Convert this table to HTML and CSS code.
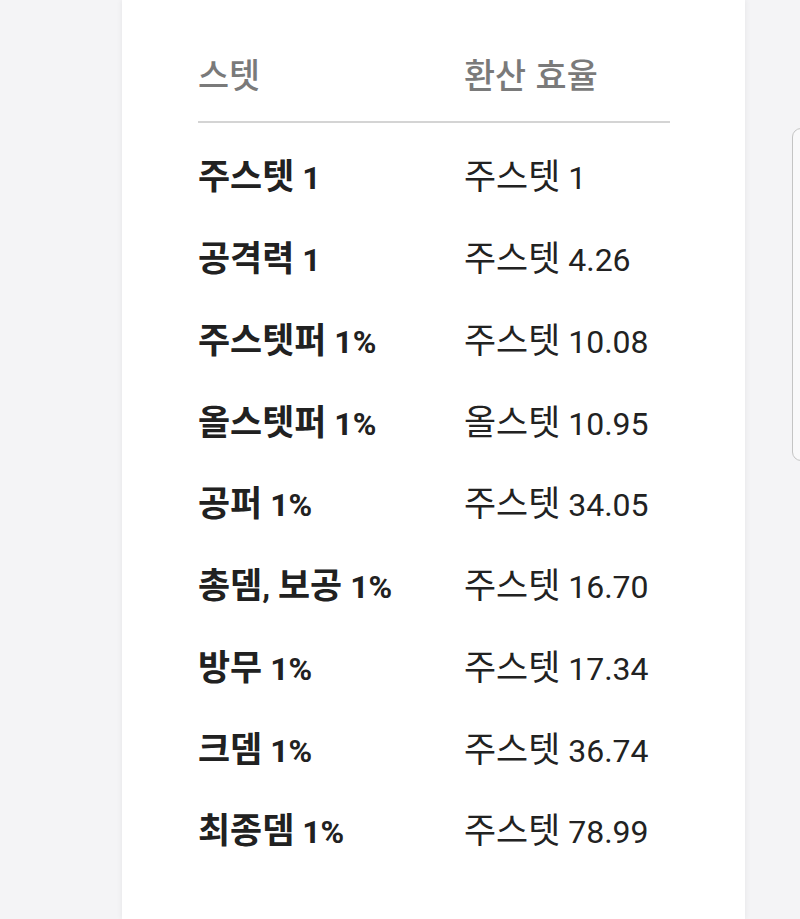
FILE: index.html
```html
<!DOCTYPE html>
<html lang="ko">
<head>
<meta charset="utf-8">
<title>스텟 환산 효율</title>
<link rel="stylesheet" href="styles.css">
</head>
<body>
<main class="card">
  <div class="table">
    <div class="head">
      <div class="th"><span class="ko">스텟</span></div>
      <div class="th"><span class="ko">환산 효율</span></div>
    </div>
    <div class="body">
      <div class="row"><div class="name"><span class="ko">주스텟</span> 1</div><div class="val"><span class="ko">주스텟</span> 1</div></div>
      <div class="row"><div class="name"><span class="ko">공격력</span> 1</div><div class="val"><span class="ko">주스텟</span> 4.26</div></div>
      <div class="row"><div class="name"><span class="ko">주스텟퍼</span> 1%</div><div class="val"><span class="ko">주스텟</span> 10.08</div></div>
      <div class="row"><div class="name"><span class="ko">올스텟퍼</span> 1%</div><div class="val"><span class="ko">올스텟</span> 10.95</div></div>
      <div class="row"><div class="name"><span class="ko">공퍼</span> 1%</div><div class="val"><span class="ko">주스텟</span> 34.05</div></div>
      <div class="row"><div class="name"><span class="ko">총뎀</span>, <span class="ko">보공</span> 1%</div><div class="val"><span class="ko">주스텟</span> 16.70</div></div>
      <div class="row"><div class="name"><span class="ko">방무</span> 1%</div><div class="val"><span class="ko">주스텟</span> 17.34</div></div>
      <div class="row"><div class="name"><span class="ko">크뎀</span> 1%</div><div class="val"><span class="ko">주스텟</span> 36.74</div></div>
      <div class="row"><div class="name"><span class="ko">최종뎀</span> 1%</div><div class="val"><span class="ko">주스텟</span> 78.99</div></div>
    </div>
  </div>
</main>
<div class="scroll-handle"></div>
</body>
</html>
```
FILE: styles.css
```css
html, body {
  margin: 0;
  padding: 0;
  height: 100%;
  overflow: hidden;
}
body {
  background: #f4f4f6;
  font-family: Roboto, "Noto Sans CJK KR", sans-serif;
  color: #212121;
}
.card {
  margin-left: 122px;
  width: 623px;
  min-height: 100%;
  background: #ffffff;
  box-shadow: 0 0 6px rgba(0, 0, 0, 0.07);
  box-sizing: border-box;
  padding: 0 75px 0 76px;
}
.table {
  display: flex;
  flex-direction: column;
}
.ko {
  font-family: "Noto Sans CJK KR", sans-serif;
  font-size: 1.09em;
  line-height: 1;
}
.head {
  display: grid;
  grid-template-columns: 266px 1fr;
  border-bottom: 2px solid #d4d4d4;
  padding: 57px 0 23px;
}
.th {
  font-size: 31px;
  line-height: 40px;
  font-weight: 500;
  color: #7a7a7a;
}
.body {
  padding-top: 14px;
  display: flex;
  flex-direction: column;
}
.row {
  display: grid;
  grid-template-columns: 266px 1fr;
  height: 81.75px;
  align-items: center;
  font-size: 32px;
  line-height: 40px;
}
.name {
  font-weight: 700;
  color: #212121;
}
.val {
  font-weight: 400;
  color: #222222;
}
.scroll-handle {
  position: fixed;
  left: 792px;
  top: 128px;
  width: 30px;
  height: 333px;
  border: 1px solid #c4c4c4;
  border-radius: 9px;
  background: #f9f9fa;
  box-sizing: border-box;
}
```
